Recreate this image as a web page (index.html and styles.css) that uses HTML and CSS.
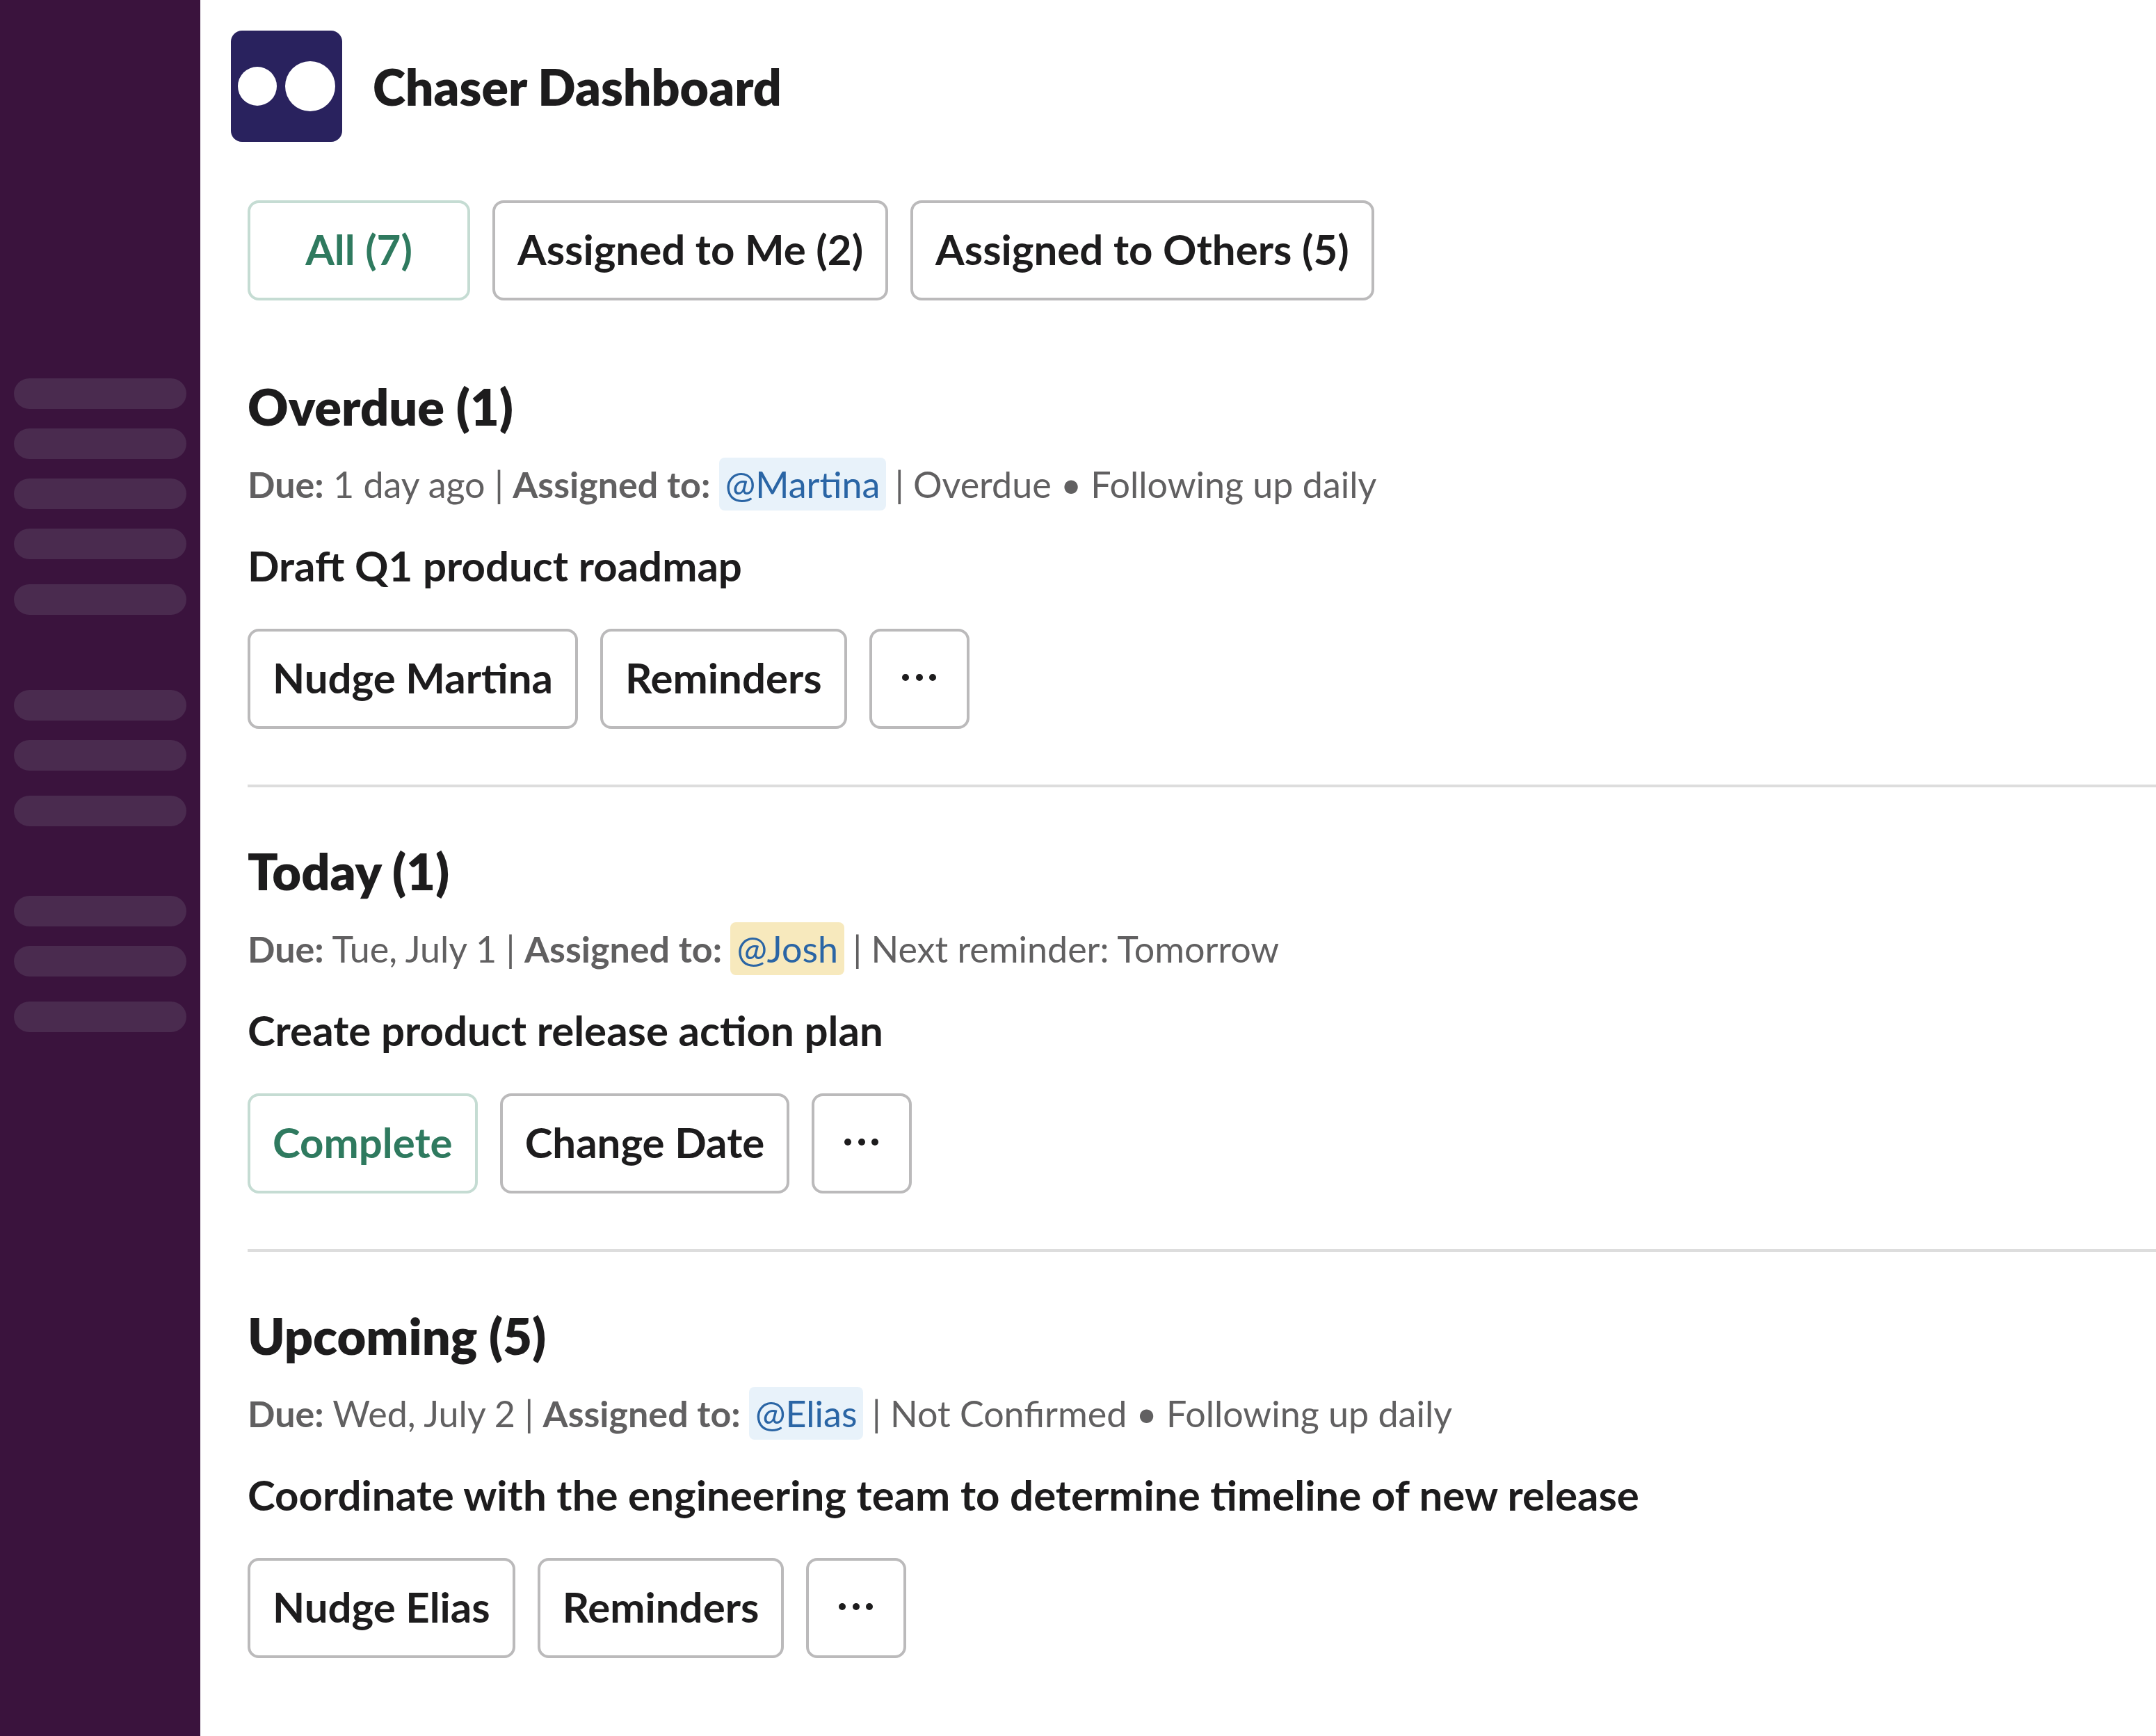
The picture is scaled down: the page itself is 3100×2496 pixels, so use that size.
FILE: index.html
```html
<!DOCTYPE html>
<html lang="en">
<head>
  <meta charset="UTF-8">
  <meta name="viewport" content="width=device-width, initial-scale=1">
  <title>Chaser Dashboard</title>
  <link rel="stylesheet" href="styles.css">
</head>
<body>
  <!-- Sidebar placeholders -->
  <div class="sidebar">
    <div class="pill"></div>
    <div class="pill"></div>
    <div class="pill"></div>
    <div class="pill"></div>
    <div class="pill pill-near"></div>
    <div class="pill pill-group"></div>
    <div class="pill"></div>
    <div class="pill pill-near"></div>
    <div class="pill pill-group-last"></div>
    <div class="pill"></div>
    <div class="pill pill-near"></div>
  </div>

  <div class="main">
    <div class="header">
      <div class="logo">
        <svg viewBox="0 0 160 160" width="160" height="160">
          <circle cx="38" cy="80" r="28" fill="#fff"/>
          <circle cx="114" cy="80" r="36" fill="#fff"/>
        </svg>
      </div>
      <h1>Chaser Dashboard</h1>
    </div>

    <div class="content">
      <div class="btn-row tabs">
        <button class="btn btn-green btn-tab">All (7)</button>
        <button class="btn">Assigned to Me (2)</button>
        <button class="btn">Assigned to Others (5)</button>
      </div>

      <section class="group">
        <h2>Overdue (1)</h2>
        <p class="meta"><b>Due:</b> 1 day ago | <b>Assigned to:</b> <span class="mention">@Martina</span> | Overdue • Following up daily</p>
        <p class="task">Draft Q1 product roadmap</p>
        <div class="btn-row">
          <button class="btn">Nudge Martina</button>
          <button class="btn">Reminders</button>
          <button class="btn btn-more" aria-label="More">
            <svg viewBox="0 0 50 10" width="50" height="10"><circle cx="5" cy="5" r="5"/><circle cx="25" cy="5" r="5"/><circle cx="44" cy="5" r="5"/></svg>
          </button>
        </div>
      </section>

      <section class="group">
        <h2>Today (1)</h2>
        <p class="meta"><b>Due:</b> Tue, July 1 | <b>Assigned to:</b> <span class="mention mention-me">@Josh</span> | Next reminder: Tomorrow</p>
        <p class="task">Create product release action plan</p>
        <div class="btn-row">
          <button class="btn btn-green">Complete</button>
          <button class="btn">Change Date</button>
          <button class="btn btn-more" aria-label="More">
            <svg viewBox="0 0 50 10" width="50" height="10"><circle cx="5" cy="5" r="5"/><circle cx="25" cy="5" r="5"/><circle cx="44" cy="5" r="5"/></svg>
          </button>
        </div>
      </section>

      <section class="group">
        <h2>Upcoming (5)</h2>
        <p class="meta"><b>Due:</b> Wed, July 2 | <b>Assigned to:</b> <span class="mention">@Elias</span> | Not Confirmed • Following up daily</p>
        <p class="task">Coordinate with the engineering team to determine timeline of new release</p>
        <div class="btn-row">
          <button class="btn">Nudge Elias</button>
          <button class="btn">Reminders</button>
          <button class="btn btn-more" aria-label="More">
            <svg viewBox="0 0 50 10" width="50" height="10"><circle cx="5" cy="5" r="5"/><circle cx="25" cy="5" r="5"/><circle cx="44" cy="5" r="5"/></svg>
          </button>
        </div>
      </section>
    </div>
  </div>
</body>
</html>
```

FILE: styles.css
```css
/* Two columns: sidebar and main */
body {
  margin: 0;
  height: 2496px;
  display: flex;
  overflow: hidden;
  font-family: Lato, "Noto Sans", sans-serif;
  color: #1d1c1d;
  background: #fff;
}

.sidebar {
  width: 288px;
  flex-shrink: 0;
  box-sizing: border-box;
  padding: 544px 20px 0;
  display: flex;
  flex-direction: column;
  gap: 28px;
  background: #3a133d;
}

.pill {
  height: 44px;
  border-radius: 22px;
  background: #4a2b4f;
}

.pill-near {
  margin-top: 8px;
}

.pill-group {
  margin-top: 80px;
}

.pill-group-last {
  margin-top: 72px;
}

.main {
  flex: 1;
  min-width: 0;
}

.header {
  display: flex;
  align-items: center;
  gap: 44px;
  padding: 44px 0 0 44px;
}

.logo {
  width: 160px;
  height: 160px;
  border-radius: 16px;
  background: #29225e;
  overflow: hidden;
}

.logo svg {
  display: block;
}

h1 {
  margin: 0;
  font-size: 71.5px;
  font-weight: 800;
  line-height: 84px;
}

.content {
  padding: 84px 0 0 68px;
}

.btn-row {
  display: flex;
  gap: 32px;
}

.btn {
  height: 144px;
  box-sizing: border-box;
  padding: 0 32px 4px;
  border: 4px solid #bbbabb;
  border-radius: 16px;
  background: #fff;
  color: #1d1c1d;
  font-family: inherit;
  font-size: 60px;
  font-weight: 700;
}

.btn-green {
  border-color: #c5dcd3;
  color: #2f7a5f;
}

.btn-tab {
  width: 320px;
}

.btn-more {
  width: 144px;
  padding: 0 0 4px;
}

.btn-more svg {
  display: block;
  margin: 0 auto;
  fill: #1d1c1d;
}

.group {
  padding: 0 0 80px;
  border-bottom: 4px solid #dddddd;
}

.group:last-child {
  border-bottom: none;
}

.tabs {
  margin-bottom: 108px;
}

h2 {
  margin: 0;
  font-size: 72px;
  font-weight: 800;
  line-height: 88px;
}

.meta {
  margin: 30px 0 0;
  font-size: 52px;
  line-height: 76px;
  color: #616061;
}

.task {
  margin: 37px 0 0;
  font-size: 60px;
  font-weight: 700;
  line-height: 84px;
}

.group .btn-row {
  margin-top: 49px;
}

.group + .group {
  padding-top: 76px;
}

.mention {
  display: inline-block;
  padding: 0 9px;
  margin: 0 -1px;
  border-radius: 8px;
  background: #e8f2fa;
  color: #2a65a5;
}

.mention-me {
  background: #f7e9bd;
}
```
